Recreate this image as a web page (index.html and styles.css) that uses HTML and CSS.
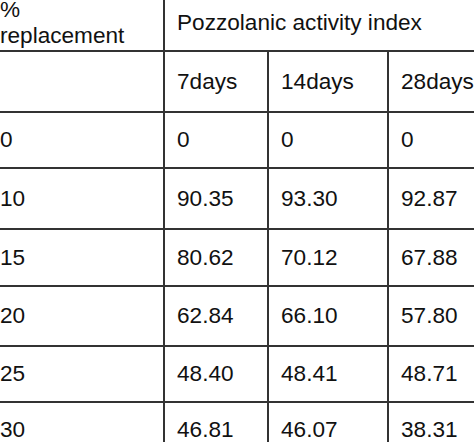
FILE: index.html
```html
<!DOCTYPE html>
<html>
<head>
<meta charset="utf-8">
<link rel="stylesheet" href="styles.css">
</head>
<body>
<div class="frame">
<table class="tbl">
<colgroup><col class="c1"><col class="c2"><col class="c3"><col class="c4"></colgroup>
<tr class="r-h1"><td>%<br>replacement</td><td colspan="3">Pozzolanic activity index</td></tr>
<tr class="r-h2"><td></td><td>7days</td><td>14days</td><td>28days</td></tr>
<tr class="r-a"><td>0</td><td>0</td><td>0</td><td>0</td></tr>
<tr class="r-b"><td>10</td><td>90.35</td><td>93.30</td><td>92.87</td></tr>
<tr class="r-c"><td>15</td><td>80.62</td><td>70.12</td><td>67.88</td></tr>
<tr class="r-d"><td>20</td><td>62.84</td><td>66.10</td><td>57.80</td></tr>
<tr class="r-a"><td>25</td><td>48.40</td><td>48.41</td><td>48.71</td></tr>
<tr class="r-a"><td>30</td><td>46.81</td><td>46.07</td><td>38.31</td></tr>
</table>
</div>
</body>
</html>
```
FILE: styles.css
```css
html, body {
  margin: 0;
  padding: 0;
  background: #fff;
}
.frame {
  width: 474px;
  height: 442px;
  overflow: hidden;
}
.tbl {
  border-collapse: collapse;
  table-layout: fixed;
  width: 521px;
  margin-left: -14px;
  margin-top: -6px;
  font-family: "Liberation Sans", Arial, sans-serif;
  font-size: 22.6px;
  line-height: 26px;
  color: #111;
}
.c1 { width: 177px; }
.c2 { width: 104px; }
.c3 { width: 120px; }
.c4 { width: 120px; }
.tbl td {
  border: 2px solid #333;
  padding: 0 0 0 12px;
  vertical-align: middle;
  white-space: nowrap;
  overflow: hidden;
}
.r-h1 { height: 56px; }
.r-h2 { height: 61px; }
.r-a { height: 56px; }
.r-b { height: 61px; }
.r-c { height: 57px; }
.r-d { height: 60px; }
```
